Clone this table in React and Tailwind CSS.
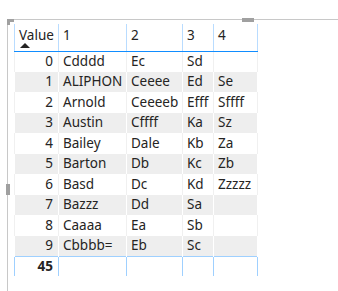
import React from "react";

const rows = [
  [0, "Cdddd", "Ec", "Sd", ""],
  [1, "ALIPHON", "Ceeee", "Ed", "Se"],
  [2, "Arnold", "Ceeeeb", "Efff", "Sffff"],
  [3, "Austin", "Cffff", "Ka", "Sz"],
  [4, "Bailey", "Dale", "Kb", "Za"],
  [5, "Barton", "Db", "Kc", "Zb"],
  [6, "Basd", "Dc", "Kd", "Zzzzz"],
  [7, "Bazzz", "Dd", "Sa", ""],
  [8, "Caaaa", "Ea", "Sb", ""],
  [9, "Cbbbb=", "Eb", "Sc", ""],
];

const widths = ["w-[44px]", "w-[68px]", "w-[56px]", "w-[31px]", "w-[44px]"];
const headers = ["Value", "1", "2", "3", "4"];

export default function App() {
  return (
    <div
      className="relative flex flex-col w-[338px] h-[291px] bg-white overflow-hidden pt-[19px] pl-[7px] text-[#252423]"
      style={{ fontFamily: '"Segoe UI", "Noto Sans", "Open Sans", sans-serif' }}
    >
      {/* visual frame */}
      <div className="relative flex-1 border-t border-l border-[#c8c8c8] pl-[6px] pt-[4px]">
        <table className="border-collapse table-fixed text-[13.5px] leading-none">
          <colgroup>
            {widths.map((w, i) => (
              <col key={i} className={w} />
            ))}
          </colgroup>
          <thead>
            <tr className="h-[27px]">
              {headers.map((h, i) => (
                <th
                  key={i}
                  className="relative border-x border-[#b9dcff] border-b border-b-[#118dff] font-normal text-left align-top px-[4px] pt-[5px]"
                >
                  {h}
                  {i === 0 && (
                    <span className="absolute left-[5px] top-[19px] w-0 h-0 border-l-[5px] border-r-[5px] border-b-[5px] border-l-transparent border-r-transparent border-b-[#252423]" />
                  )}
                </th>
              ))}
            </tr>
          </thead>
          <tbody>
            {rows.map((r, ri) => (
              <tr key={ri} className={`h-[20.5px] ${ri % 2 === 1 ? "bg-[#eeeeee]" : "bg-white"}`}>
                {r.map((c, ci) => (
                  <td
                    key={ci}
                    className={`border-x ${ri % 2 === 1 ? "border-white" : "border-[#f0f0f0]"} ${
                      ci === 0 ? "text-right pr-[5px]" : "text-left pl-[4px]"
                    } whitespace-nowrap overflow-hidden`}
                  >
                    {c}
                  </td>
                ))}
              </tr>
            ))}
            <tr className="h-[20px]">
              {[45, "", "", "", ""].map((c, ci) => (
                <td
                  key={ci}
                  className={`border-x border-t border-[#9fd0ff] ${
                    ci === 0 ? "text-right pr-[5px] font-bold" : ""
                  }`}
                >
                  {c}
                </td>
              ))}
            </tr>
          </tbody>
        </table>

        {/* corner and resize handles */}
        <span className="absolute -left-px -top-px w-[7px] h-[6px] border-t-[3px] border-l-[3px] border-[#a0a0a0]" />
        <span className="absolute left-[234px] -top-[2px] w-[12px] h-[4px] bg-[#a0a0a0]" />
        <span className="absolute -left-[2px] top-[164px] w-[4px] h-[11px] bg-[#a0a0a0]" />
      </div>
    </div>
  );
}
